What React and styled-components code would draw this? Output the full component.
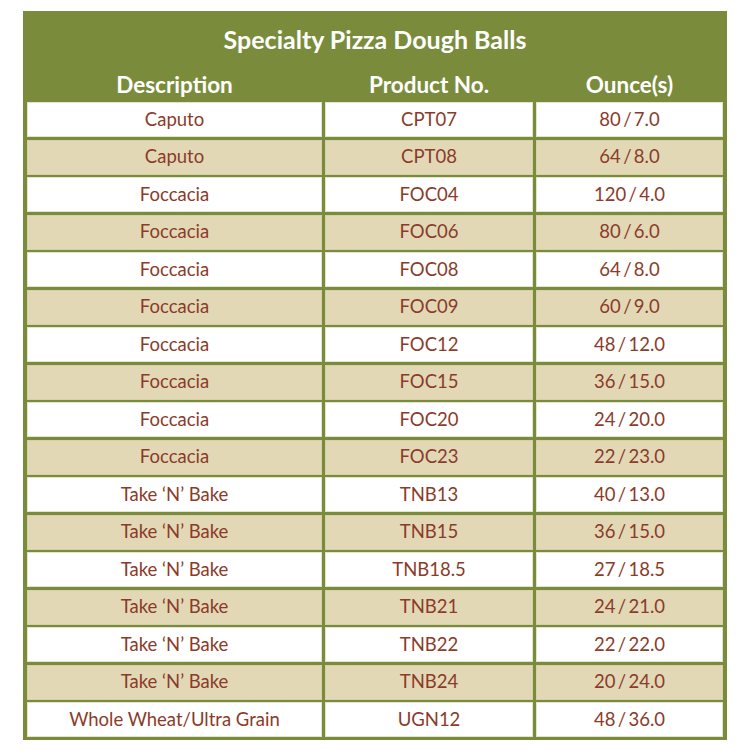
import React from 'react';
import styled, { createGlobalStyle } from 'styled-components';

const GlobalStyle = createGlobalStyle`
    body {
        margin: 0;
        background: #ffffff;
        font-family: Lato, "Open Sans", sans-serif;
    }
`;

const Page = styled.div`
    padding: 11px 23px;
`;

const Table = styled.div`
    width: 704px;
    background: #7a8c3b;
    padding: 0 4px 3px 4px;
    box-sizing: border-box;
`;

const Title = styled.div`
    height: 57px;
    display: flex;
    align-items: center;
    justify-content: center;
    color: #ffffff;
    font-weight: 700;
    font-size: 25px;
    padding-bottom: 2px;
    box-sizing: border-box;
`;

const Grid = styled.div`
    display: grid;
    grid-template-columns: 295px 208px 1fr;
    column-gap: 3px;
    row-gap: 2.5px;
`;

const HeadCell = styled.div`
    height: 31.5px;
    display: flex;
    align-items: center;
    justify-content: center;
    color: #ffffff;
    font-weight: 700;
    font-size: 22.5px;
    box-sizing: border-box;
    padding-top: 2px;
`;

const Cell = styled.div`
    height: 35px;
    display: flex;
    align-items: center;
    justify-content: center;
    box-sizing: border-box;
    padding-bottom: 2px;
    background: ${p => (p.$shaded ? '#e2d8b6' : '#ffffff')};
    box-shadow: inset 0 0 0 1px ${p => (p.$shaded ? '#d6d0a8' : '#dfe5cf')};
    color: #8b3b29;
    font-size: 18.5px;
`;

const rows = [
    ['Caputo', 'CPT07', '80 / 7.0'],
    ['Caputo', 'CPT08', '64 / 8.0'],
    ['Foccacia', 'FOC04', '120 / 4.0'],
    ['Foccacia', 'FOC06', '80 / 6.0'],
    ['Foccacia', 'FOC08', '64 / 8.0'],
    ['Foccacia', 'FOC09', '60 / 9.0'],
    ['Foccacia', 'FOC12', '48 / 12.0'],
    ['Foccacia', 'FOC15', '36 / 15.0'],
    ['Foccacia', 'FOC20', '24 / 20.0'],
    ['Foccacia', 'FOC23', '22 / 23.0'],
    ['Take \u2018N\u2019 Bake', 'TNB13', '40 / 13.0'],
    ['Take \u2018N\u2019 Bake', 'TNB15', '36 / 15.0'],
    ['Take \u2018N\u2019 Bake', 'TNB18.5', '27 / 18.5'],
    ['Take \u2018N\u2019 Bake', 'TNB21', '24 / 21.0'],
    ['Take \u2018N\u2019 Bake', 'TNB22', '22 / 22.0'],
    ['Take \u2018N\u2019 Bake', 'TNB24', '20 / 24.0'],
    ['Whole Wheat/Ultra Grain', 'UGN12', '48 / 36.0'],
];

// the ounce column uses tighter spacing round the slash
const tighten = text => text.replace(/ \/ /g, '\u2009/\u2009');

const App = () => {
    return (
        <Page>
            <GlobalStyle />
            <Table>
                <Title>Specialty Pizza Dough Balls</Title>
                <Grid>
                    <HeadCell>Description</HeadCell>
                    <HeadCell>Product No.</HeadCell>
                    <HeadCell>Ounce(s)</HeadCell>
                    {rows.map((row, i) =>
                        row.map((text, j) => (
                            <Cell key={i + '-' + j} $shaded={i % 2 === 1}>
                                {j === 2 ? tighten(text) : text}
                            </Cell>
                        ))
                    )}
                </Grid>
            </Table>
        </Page>
    );
};

export default App;
